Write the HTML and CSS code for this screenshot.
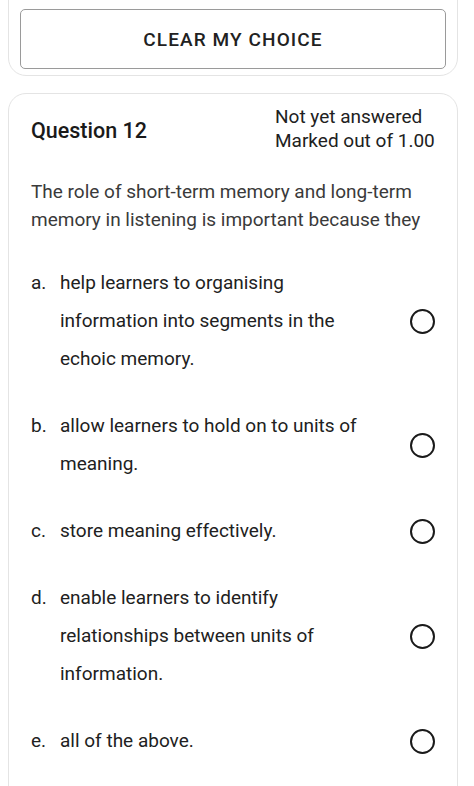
FILE: index.html
```html
<!DOCTYPE html>
<html>
<head>
<meta charset="utf-8">
<link rel="stylesheet" href="styles.css">
</head>
<body>
<div class="card top-card">
  <button class="clear-btn">CLEAR MY CHOICE</button>
</div>
<div class="card question-card">
  <div class="q-head">
    <div class="q-title">Question 12</div>
    <div class="q-status">
      <div>Not yet answered</div>
      <div>Marked out of 1.00</div>
    </div>
  </div>
  <div class="q-text">The role of short-term memory and long-term memory in listening is important because they</div>
  <div class="options">
    <div class="option">
      <span class="letter">a.</span>
      <span class="label">help learners to organising information into segments in the echoic memory.</span>
      <span class="radio"></span>
    </div>
    <div class="option">
      <span class="letter">b.</span>
      <span class="label">allow learners to hold on to units of meaning.</span>
      <span class="radio"></span>
    </div>
    <div class="option">
      <span class="letter">c.</span>
      <span class="label">store meaning effectively.</span>
      <span class="radio"></span>
    </div>
    <div class="option">
      <span class="letter">d.</span>
      <span class="label">enable learners to identify relationships between units of information.</span>
      <span class="radio"></span>
    </div>
    <div class="option">
      <span class="letter">e.</span>
      <span class="label">all of the above.</span>
      <span class="radio"></span>
    </div>
  </div>
</div>
</body>
</html>
```
FILE: styles.css
```css
html, body {
  margin: 0;
  padding: 0;
  background: #ffffff;
  font-family: Roboto, "Liberation Sans", sans-serif;
  color: #212121;
}
body {
  overflow: hidden;
  height: 786px;
}
.card {
  margin-left: 8px;
  width: 450px;
  box-sizing: border-box;
  border: 1px solid #e4e4e4;
  border-radius: 18px;
  background: #fff;
}
.top-card {
  margin-top: -40px;
  padding: 48px 11px 6px 11px;
}
.clear-btn {
  display: block;
  width: 100%;
  height: 60px;
  background: #fff;
  border: 1.5px solid #9a9a9a;
  border-radius: 5px;
  font-family: Roboto, "Liberation Sans", sans-serif;
  font-size: 19px;
  font-weight: 500;
  letter-spacing: 1.1px;
  color: #212121;
  padding: 0;
}
.question-card {
  margin-top: 17px;
  padding: 11px 22px 40px 22px;
  min-height: 760px;
}
.q-head {
  display: flex;
  justify-content: space-between;
  align-items: flex-start;
}
.q-title {
  font-size: 21.5px;
  line-height: 24px;
  padding-top: 14px;
  font-weight: 500;
  color: #1a1a1a;
}
.q-status {
  font-size: 19px;
  line-height: 24px;
  color: #212121;
  width: 160px;
  white-space: nowrap;
}
.q-text {
  margin-top: 25px;
  font-size: 19px;
  line-height: 28px;
  color: #3a3a3a;
}
.options {
  margin-top: 16px;
}
.option {
  display: flex;
  align-items: center;
  padding: 14px 0 15px 0;
  font-size: 19px;
  line-height: 38px;
  color: #212121;
}
.letter {
  width: 29px;
  flex: none;
  align-self: flex-start;
}
.label {
  flex: 1;
  padding-right: 44px;
}
.radio {
  flex: none;
  width: 21px;
  height: 21px;
  border: 2.5px solid #1a1a1a;
  border-radius: 50%;
}
```
